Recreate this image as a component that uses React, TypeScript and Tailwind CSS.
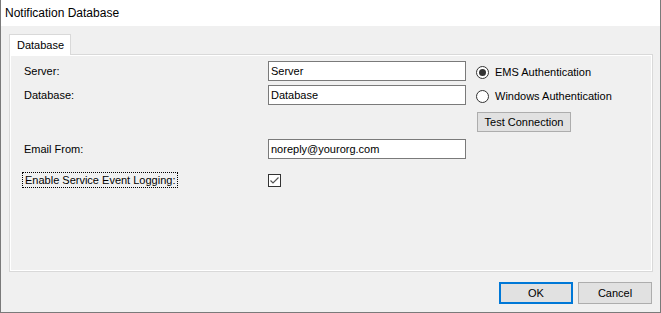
import React from "react";

const font = "font-['Liberation_Sans',Arial,sans-serif]";

function Radio({ checked, label }: { checked?: boolean; label: string }) {
  return (
    <div className="flex items-center translate-y-[1px]">
      <div className="w-[13px] h-[13px] rounded-full border border-[#333] bg-white flex items-center justify-center">
        {checked && <div className="w-[7px] h-[7px] rounded-full bg-[#333]" />}
      </div>
      <span className="ml-[6px] text-[11px] text-black">{label}</span>
    </div>
  );
}

function TextBox({ value }: { value: string }) {
  return (
    <div className="w-[198px] h-[20px] border border-[#7a7a7a] bg-white pl-[2px] flex items-center text-[11px] text-black">
      {value}
    </div>
  );
}

export default function App() {
  return (
    <div className={`w-[661px] h-[313px] border-x border-b border-[#7a7a7a] bg-[#f0f0f0] text-[11px] text-black ${font} flex flex-col`}>
      {/* title bar */}
      <div className="h-[26px] bg-white flex items-center pl-[4px] text-[12px]">Notification Database</div>

      <div className="flex-1 flex flex-col px-[8px] pt-[8px]">
        {/* tab header */}
        <div className="flex">
          <div className="w-[62px] h-[21px] bg-white border border-b-0 border-[#d9d9d9] pl-[7px] flex items-center text-[11px] -mb-px relative z-10">
            Database
          </div>
        </div>

        {/* tab page */}
        <div className="w-[644px] h-[218px] border border-[#d9d9d9] bg-[#f0f0f0] outline outline-1 -outline-offset-2 outline-white pl-[14px] pt-[6px]">
          <div className="flex items-center h-[20px]">
            <span className="w-[244px]">Server:</span>
            <TextBox value="Server" />
            <div className="ml-[10px]">
              <Radio checked label="EMS Authentication" />
            </div>
          </div>
          <div className="flex items-center h-[20px] mt-[4px]">
            <span className="w-[244px]">Database:</span>
            <TextBox value="Database" />
            <div className="ml-[10px]">
              <Radio label="Windows Authentication" />
            </div>
          </div>
          <div className="flex h-[20px] mt-[7px]">
            <button className="ml-[453px] w-[94px] h-[20px] bg-[#e1e1e1] border border-[#adadad] text-[11px] flex items-center justify-center">
              Test Connection
            </button>
          </div>
          <div className="flex items-center h-[20px] mt-[7px]">
            <span className="w-[244px]">Email From:</span>
            <TextBox value="noreply@yourorg.com" />
          </div>
          <div className="flex items-center h-[16px] mt-[13px]">
            <div className="w-[244px] -ml-[2px]">
              <span className="inline-block border border-dotted border-black px-[2px] leading-[14px]">
                Enable Service Event Logging:
              </span>
            </div>
            <div className="w-[13px] h-[13px] border border-[#333] bg-white ml-[2px] flex items-center justify-center">
              <svg width="11" height="11" viewBox="0 0 11 11">
                <path d="M1.5 5.5 L4 8 L9.5 2.5" fill="none" stroke="#555" strokeWidth="1.2" />
              </svg>
            </div>
          </div>
        </div>

        {/* dialog buttons */}
        <div className="flex justify-end gap-[5px] mt-[10px]">
          <button className="w-[74px] h-[22px] bg-[#e1e1e1] border-2 border-[#0078d7] text-[11px] flex items-center justify-center">
            OK
          </button>
          <button className="w-[74px] h-[22px] bg-[#e1e1e1] border border-[#adadad] text-[11px] flex items-center justify-center">
            Cancel
          </button>
        </div>
      </div>
    </div>
  );
}
